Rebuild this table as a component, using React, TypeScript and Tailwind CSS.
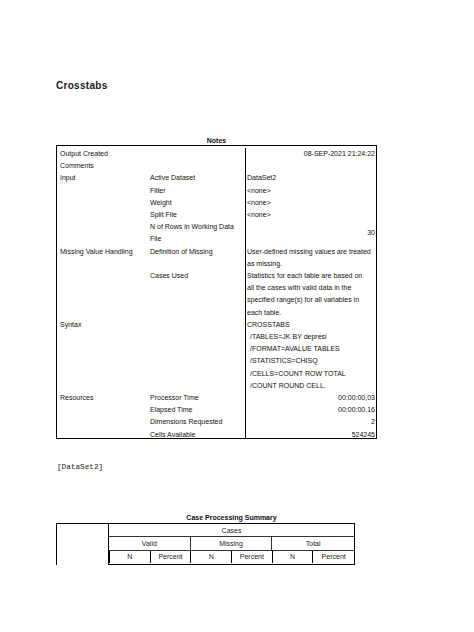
type NoteRow = {
	label?: string;
	item?: string[];
	value: string[];
	right?: boolean;
	middle?: boolean;
	indentFrom?: number;
};

const notes: NoteRow[] = [
	{ label: "Output Created", value: ["08-SEP-2021 21:24:22"], right: true },
	{ label: "Comments", value: [""] },
	{ label: "Input", item: ["Active Dataset"], value: ["DataSet2"] },
	{ item: ["Filter"], value: ["<none>"] },
	{ item: ["Weight"], value: ["<none>"] },
	{ item: ["Split File"], value: ["<none>"] },
	{ item: ["N of Rows in Working Data", "File"], value: ["30"], right: true, middle: true },
	{
		label: "Missing Value Handling",
		item: ["Definition of Missing"],
		value: ["User-defined missing values are treated", "as missing."],
	},
	{
		item: ["Cases Used"],
		value: [
			"Statistics for each table are based on",
			"all the cases with valid data in the",
			"specified range(s) for all variables in",
			"each table.",
		],
	},
	{
		label: "Syntax",
		value: [
			"CROSSTABS",
			"/TABLES=JK BY depresi",
			"/FORMAT=AVALUE TABLES",
			"/STATISTICS=CHISQ",
			"/CELLS=COUNT ROW TOTAL",
			"/COUNT ROUND CELL.",
		],
		indentFrom: 1,
	},
	{ label: "Resources", item: ["Processor Time"], value: ["00:00:00,03"], right: true },
	{ item: ["Elapsed Time"], value: ["00:00:00,16"], right: true },
	{ item: ["Dimensions Requested"], value: ["2"], right: true },
	{ item: ["Cells Available"], value: ["524245"], right: true },
];

function NotesTable() {
	return (
		<div className="w-[321px]">
			<div className="h-[8px] text-center text-[7px] font-bold leading-[8px]">Notes</div>
			<div className="grid grid-cols-[90.5px_97px_1fr] border-[1.5px] border-black pt-[2px] text-[7px] leading-[12.2px]">
				{notes.map((row, i) => {
					const last = i === notes.length - 1;
					return (
						<div key={i} className={`contents ${last ? "[&>div]:h-[9.8px]" : ""}`}>
							<div className="whitespace-nowrap pl-[3px]">{row.label}</div>
							<div className="whitespace-nowrap pl-[2.5px]">
								{row.item?.map((t) => <div key={t}>{t}</div>)}
							</div>
							<div
								className={`flex flex-col border-l-[1.5px] border-black pl-[1.5px] pr-[1px] ${
									row.right ? "items-end" : "items-start"
								} ${row.middle ? "justify-center" : "justify-start"}`}
							>
								{row.value.map((t, j) => (
									<div
										key={j}
										className={`whitespace-nowrap ${
											row.indentFrom !== undefined && j >= row.indentFrom ? "pl-[3px]" : ""
										}`}
									>
										{t || "\u00a0"}
									</div>
								))}
							</div>
						</div>
					);
				})}
			</div>
		</div>
	);
}

const groups = ["Valid", "Missing", "Total"];

function CaseSummary() {
	return (
		<div className="w-[299px]">
			<div className="ml-[52px] h-[8px] w-[247px] text-center text-[7px] font-bold leading-[8px]">
				Case Processing Summary
			</div>
			<div className="mt-[0.5px] flex text-[7px] text-[#222]">
				<div className="h-[42px] w-[52px] border-l-[1.5px] border-t-[1.5px] border-black" />
				<div className="w-[247px] border-[1.5px] border-l border-black">
					<div className="h-[13px] border-b border-[#333] text-center leading-[13px]">Cases</div>
					<div className="grid h-[14px] grid-cols-3 border-b border-[#333] text-center leading-[13px]">
						{groups.map((g, i) => (
							<div key={g} className={i < 2 ? "border-r border-[#333]" : ""}>
								{g}
							</div>
						))}
					</div>
					<div className="grid h-[12px] grid-cols-6 border-l border-black text-center leading-[12px]">
						{groups.flatMap((g) => ["N", "Percent"].map((h) => `${g}-${h}`)).map((k, i) => (
							<div key={k} className={i < 5 ? "border-r border-black" : ""}>
								{k.split("-")[1]}
							</div>
						))}
					</div>
				</div>
			</div>
		</div>
	);
}

export default function App() {
	return (
		<div className="h-[632px] w-[474px] overflow-hidden bg-white pl-[56px] pt-[80px] font-['Liberation_Sans',Arial,sans-serif] text-[#111]">
			<h1 className="text-[10px] font-bold leading-[12px] tracking-[0.3px] text-[#1a1a1a]">Crosstabs</h1>
			<div className="mt-[45px]">
				<NotesTable />
			</div>
			<div className="mt-[23px] pl-[1px] font-['Liberation_Mono',monospace] text-[7.7px] leading-[10px] text-[#222]">
				[DataSet2]
			</div>
			<div className="mt-[42px]">
				<CaseSummary />
			</div>
		</div>
	);
}
